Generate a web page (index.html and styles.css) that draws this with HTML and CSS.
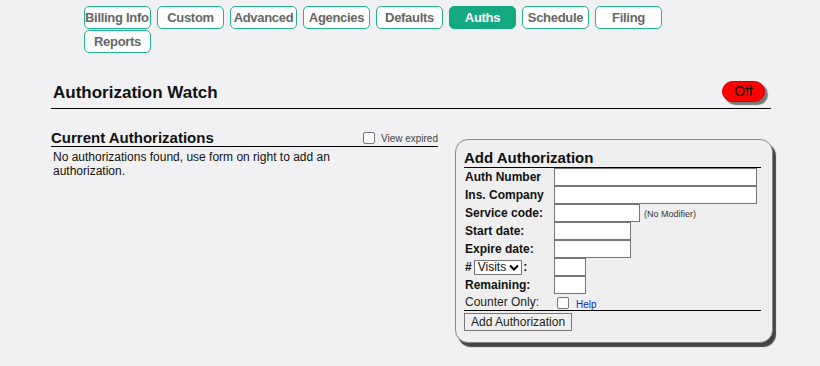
FILE: index.html
```html
<!DOCTYPE html>
<html>
<head>
<meta charset="utf-8">
<link rel="stylesheet" href="styles.css">
</head>
<body>
<div class="tabs">
  <span class="tab">Billing Info</span>
  <span class="tab">Custom</span>
  <span class="tab">Advanced</span>
  <span class="tab">Agencies</span>
  <span class="tab">Defaults</span>
  <span class="tab active">Auths</span>
  <span class="tab">Schedule</span>
  <span class="tab">Filing</span>
  <span class="tab">Reports</span>
</div>
<div class="watch">
  <h1 class="watch-title">Authorization Watch</h1>
  <span class="off">Off</span>
</div>
<div class="main">
  <div class="current">
    <div class="current-head">
      <h2 class="current-title">Current Authorizations</h2>
      <label class="expired"><span class="cb"></span>View expired</label>
    </div>
    <p class="none">No authorizations found, use form on right to add an authorization.</p>
  </div>
  <div class="addbox">
    <h2 class="add-title">Add Authorization</h2>
    <div class="form">
      <div class="row"><span class="lbl">Auth Number</span><span class="inp w203"></span></div>
      <div class="row"><span class="lbl">Ins. Company</span><span class="inp w203"></span></div>
      <div class="row"><span class="lbl">Service code:</span><span class="inp w86"></span><span class="note">(No Modifier)</span></div>
      <div class="row"><span class="lbl">Start date:</span><span class="inp w77"></span></div>
      <div class="row"><span class="lbl">Expire date:</span><span class="inp w77"></span></div>
      <div class="row"><span class="lbl"># <span class="sel">Visits<svg width="10" height="7" viewBox="0 0 10 7"><path d="M1 1.5 L5 5.5 L9 1.5" fill="none" stroke="#000" stroke-width="2"/></svg></span>:</span><span class="inp w32"></span></div>
      <div class="row"><span class="lbl">Remaining:</span><span class="inp w32"></span></div>
      <div class="row counter"><span class="lbl normal">Counter Only:</span><span class="cb cb2"></span><span class="help">Help</span></div>
    </div>
    <div class="btnrow"><span class="btn">Add Authorization</span></div>
  </div>
</div>
</body>
</html>
```
FILE: styles.css
```css
* { box-sizing: border-box; }
body {
  margin: 0;
  background: #f1f1f3;
  font-family: "Liberation Sans", Arial, sans-serif;
  color: #111;
  width: 820px;
  height: 366px;
  overflow: hidden;
}
.tabs {
  display: flex;
  flex-wrap: wrap;
  gap: 1px 6px;
  width: 590px;
  margin-left: 84px;
  padding-top: 6px;
}
.tab {
  width: 67px;
  height: 23px;
  border: 1px solid #1db68f;
  border-radius: 5px;
  background: #fff;
  color: #666;
  font-weight: bold;
  font-size: 13px;
  display: flex;
  align-items: center;
  justify-content: center;
  white-space: nowrap;
  overflow: hidden;
  letter-spacing: -0.3px;
}
.tab:first-child { justify-content: flex-start; padding-left: 0; }
.tab.active { background: #14a880; color: #fff; border-color: #14a880; }
.watch {
  margin: 27px 49px 0 51px;
  border-bottom: 1px solid #000;
  display: flex;
  align-items: center;
  justify-content: space-between;
  height: 29px;
  padding-bottom: 2px;
}
.watch-title {
  margin: 0 0 0 2px;
  font-size: 17px;
  font-weight: bold;
  color: #111;
}
.off {
  width: 43px;
  height: 21px;
  background: #f00;
  border-radius: 11px;
  border: 1px solid #c00;
  box-shadow: 3px 3px 1px #777;
  color: #111;
  font-size: 14px;
  display: flex;
  align-items: center;
  justify-content: center;
  margin-right: 6px;
  margin-bottom: 4px;
}
.main {
  display: flex;
  align-items: flex-start;
  margin-left: 51px;
  margin-top: 20px;
}
.current { width: 387px; }
.current-head {
  display: flex;
  justify-content: space-between;
  align-items: flex-end;
  border-bottom: 1px solid #000;
  height: 18px;
}
.current-title { margin: 0; font-size: 15px; font-weight: bold; line-height: 17px; }
.expired {
  display: flex;
  align-items: center;
  font-size: 10px;
  color: #444;
  margin-bottom: 2px;
}
.cb {
  display: inline-block;
  width: 12px;
  height: 12px;
  border: 1px solid #767676;
  border-radius: 2px;
  background: #fff;
  margin-right: 6px;
}
.none { margin: 3px 0 0 2px; font-size: 12px; line-height: 14px; width: 330px; }
.addbox {
  margin-left: 17px;
  margin-top: 10px;
  width: 318px;
  height: 204px;
  background: #efefef;
  border: 1px solid #888;
  border-radius: 13px;
  box-shadow: 3px 4px 1px #444;
  padding: 8px 11px 0 8px;
}
.add-title {
  margin: 0;
  font-size: 15px;
  font-weight: bold;
  line-height: 19px;
  border-bottom: 1px solid #000;
  height: 20px;
}
.form { padding-left: 1px; }
.row { display: flex; align-items: center; height: 18px; }
.lbl { width: 89px; font-size: 12px; font-weight: bold; display: flex; align-items: center; white-space: nowrap; }
.lbl.normal { font-weight: normal; color: #222; }
.inp {
  display: inline-block;
  height: 18px;
  border: 1px solid #767676;
  background: #fff;
}
.w203 { width: 203px; }
.w86 { width: 86px; }
.w77 { width: 77px; }
.w32 { width: 32px; }
.note { font-size: 9px; color: #333; margin-left: 4px; margin-top: 2px; }
.sel {
  display: inline-flex;
  align-items: center;
  gap: 3px;
  border: 1px solid #767676;
  background: #fff;
  font-weight: normal;
  font-size: 12px;
  padding: 0 2px 0 3px;
  height: 15px;
  margin: 0 1px 0 2px;
}
.counter { height: 16px; }
.cb2 { margin: 2px 7px 0 3px; }
.help { font-size: 10px; color: #1a1ac8; margin-top: 4px; }
.btnrow { border-top: 1px solid #000; padding-top: 1px; }
.btn {
  display: inline-block;
  font-size: 12px;
  border: 1px solid #767676;
  background: #efefef;
  padding: 1px 6px;
  height: 18px;
  color: #222;
}
```
